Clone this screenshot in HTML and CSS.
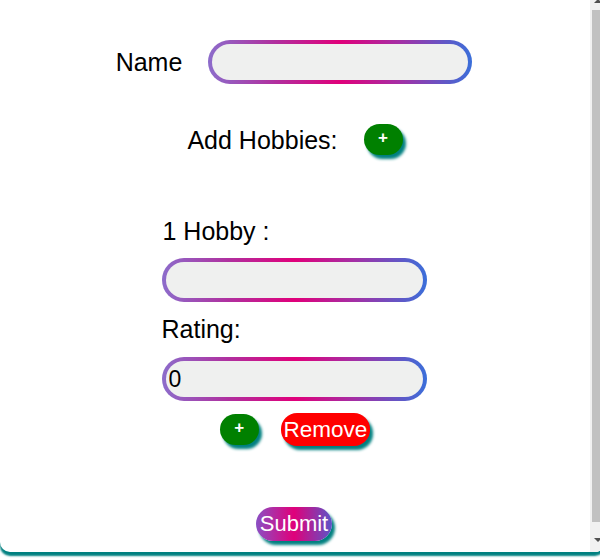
FILE: index.html
```html
<!DOCTYPE html>
<html>
<head>
<meta charset="utf-8">
<link rel="stylesheet" href="styles.css">
</head>
<body>
<div class="card">
  <form class="form">
    <div class="row name-row">
      <label class="label">Name</label>
      <input class="field field-name" type="text">
    </div>
    <div class="row add-row">
      <span class="label">Add Hobbies:</span>
      <button type="button" class="btn-plus">+</button>
    </div>
    <div class="hobby">
      <label class="label hobby-label">1 Hobby :</label>
      <input class="field" type="text">
      <label class="label rating-label">Rating:</label>
      <input class="field" type="text" value="0">
      <div class="actions">
        <button type="button" class="btn-plus">+</button>
        <button type="button" class="btn-remove">Remove</button>
      </div>
    </div>
    <button type="button" class="btn-submit">Submit</button>
  </form>
  <div class="scrollbar">
    <div class="sb-btn"><span class="arrow-up"></span></div>
    <div class="sb-thumb"></div>
    <div class="sb-btn"><span class="arrow-down"></span></div>
  </div>
</div>
</body>
</html>
```
FILE: styles.css
```css
html, body {
  margin: 0;
  padding: 0;
  overflow: hidden;
  background: #fff;
}
body {
  font-family: "Liberation Sans", Arial, sans-serif;
  width: 600px;
  height: 560px;
}
.card {
  display: flex;
  width: 605px;
  height: 562px;
  margin-top: -10px;
  box-sizing: border-box;
  border-radius: 10px;
  background: #fff;
  box-shadow: 0 4px 2px #008080;
  overflow: hidden;
}
.form {
  display: flex;
  flex-direction: column;
  align-items: center;
  padding-top: 50px;
  width: 588px;
  margin-right: 2px;
  flex: none;
}
.scrollbar {
  width: 15px;
  flex: none;
  background: #f1f1f1;
  display: flex;
  flex-direction: column;
}
.sb-btn {
  height: 15px;
  display: flex;
  align-items: center;
  justify-content: center;
}
.sb-thumb {
  flex: 1;
  margin: 5px 2px 15px;
  background: #c1c1c1;
}
.arrow-up {
  width: 0;
  height: 0;
  border-left: 4px solid transparent;
  border-right: 4px solid transparent;
  border-bottom: 4px solid #505050;
  margin-top: 6px;
}
.arrow-down {
  width: 0;
  height: 0;
  border-left: 4px solid transparent;
  border-right: 4px solid transparent;
  border-top: 4px solid #505050;
  margin-bottom: 10px;
}
.row {
  display: flex;
  align-items: center;
  gap: 26px;
}
.label {
  font-size: 25px;
  line-height: 28px;
  color: #000;
}
.field {
  box-sizing: border-box;
  width: 265px;
  height: 44px;
  border: 4px solid transparent;
  border-radius: 22px;
  background:
    linear-gradient(#eff0ef, #eff0ef) padding-box,
    linear-gradient(to right, #8c6ccb, #b0309f 25%, #e0007a 50%, #a62ea4 72%, #3a6fda) border-box;
  font-family: "Liberation Sans", Arial, sans-serif;
  font-size: 23px;
  padding: 0 3px;
  color: #000;
  outline: none;
}
.field-name {
  width: 264px;
}
.add-row {
  margin-top: 40px;
  margin-left: 2px;
}
.btn-plus {
  width: 39px;
  height: 31px;
  border: none;
  border-radius: 16px;
  background: #008000;
  color: #fff;
  font-family: "Liberation Sans", Arial, sans-serif;
  font-weight: bold;
  font-size: 17px;
  padding: 0 0 3px;
  box-shadow: 3px 4px 3px #008080;
}
.hobby {
  display: flex;
  flex-direction: column;
  align-items: flex-start;
  margin-top: 62px;
  width: 265px;
}
.hobby-label {
  margin-left: 1px;
  margin-bottom: 13px;
}
.rating-label {
  margin-top: 13px;
  margin-bottom: 14px;
}
.actions {
  display: flex;
  gap: 22px;
  align-self: center;
  margin-top: 12px;
  margin-left: 2px;
  align-items: center;
}
.btn-remove {
  height: 33px;
  border: none;
  border-radius: 16px;
  background: #ff0000;
  color: #fff;
  font-family: "Liberation Sans", Arial, sans-serif;
  font-size: 22.5px;
  padding: 0 3px;
  box-shadow: 3px 4px 3px #008080;
}
.btn-submit {
  margin-top: 61px;
  height: 34px;
  border: none;
  border-radius: 17px;
  background: linear-gradient(to right, #8a4fc4, #e0007a 50%, #5b55c8);
  color: #fff;
  font-family: "Liberation Sans", Arial, sans-serif;
  font-size: 22px;
  padding: 0 4px;
  box-shadow: 3px 4px 3px #008080;
}
```
